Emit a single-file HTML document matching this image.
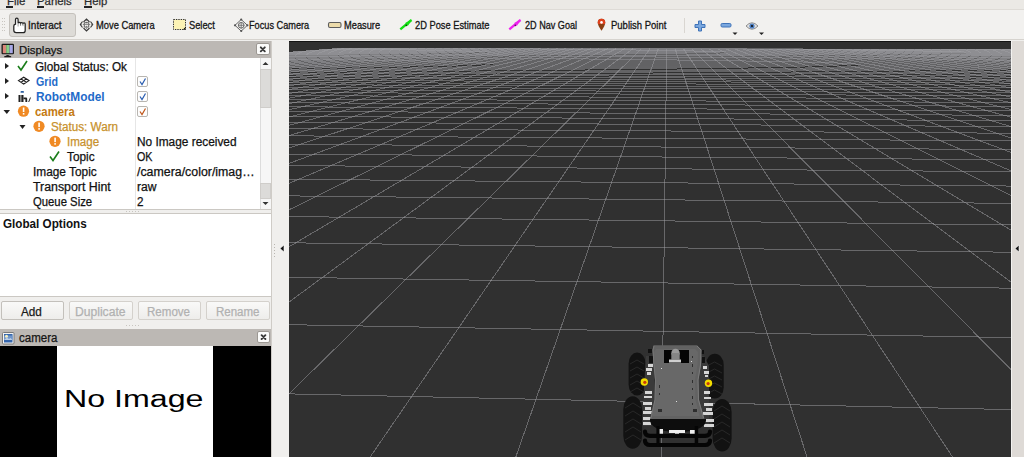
<!DOCTYPE html>
<html><head><meta charset="utf-8">
<style>
*{box-sizing:border-box;margin:0;padding:0}
html,body{width:1024px;height:457px;overflow:hidden;background:#f0efed;font-family:"Liberation Sans",sans-serif;position:relative}
.a{position:absolute}
.t{position:absolute;white-space:nowrap;line-height:1;transform-origin:0 0}
#menubar{left:0;top:0;width:1024px;height:9px;background:#ebe9e5}
#toolbar{left:0;top:9px;width:1024px;height:31px;background:#f2f1ef;border-top:1px solid #dedbd6;border-bottom:1px solid #d6d3ce}
#view{left:289px;top:41px;width:722px;height:416px;background:#303030;overflow:hidden}
#rightp{left:1011px;top:41px;width:13px;height:416px;background:#dedad6;border-left:1px solid #f3f2f0}
.hdr{background:#bcb8b4}
.closeb{width:13px;height:12px;background:#fbfbfa;border:1px solid #9c9893;border-radius:2px}
.btn{height:19px;border:1px solid #c3c0bb;border-radius:2px;background:linear-gradient(#f9f9f8,#eeedeb)}
.cb{width:11px;height:11px;border:1px solid #b8b5b0;border-radius:2px;background:#fdfdfd}
</style></head><body>
<div id="menubar" class="a"></div>
<div id="toolbar" class="a"></div>
<div class="a" style="left:6px;top:6px;width:7px;height:1.5px;background:#222"></div><div class="a" style="left:37px;top:6px;width:7px;height:1.5px;background:#222"></div><div class="a" style="left:84px;top:6px;width:8px;height:1.5px;background:#222"></div>
<!-- toolbar handle dots -->
<svg class="a" style="left:0;top:9px" width="10" height="31">
<g fill="#c9c6c1"><rect x="2" y="9" width="1" height="1"/><rect x="4" y="9" width="1" height="1"/><rect x="2" y="12" width="1" height="1"/><rect x="4" y="12" width="1" height="1"/><rect x="2" y="15" width="1" height="1"/><rect x="4" y="15" width="1" height="1"/><rect x="2" y="18" width="1" height="1"/><rect x="4" y="18" width="1" height="1"/><rect x="2" y="21" width="1" height="1"/><rect x="4" y="21" width="1" height="1"/></g>
</svg>
<div class="a" style="left:9px;top:13px;width:67px;height:24px;background:#dddbd7;border:1px solid #c4c1bc;border-radius:3px"></div>
<!-- toolbar icons -->
<svg class="a" style="left:0;top:9px" width="780" height="31">
 <!-- hand -->
 <path d="M15.5 10.6 q0-1.4 1.3-1.4 q1.3 0 1.3 1.4 v3.6 q0.4-0.8 1.3-0.8 q1 0 1.1 0.9 q0.4-0.8 1.3-0.8 q1 0 1.2 1 q0.4-0.6 1.1-0.6 q1.1 0 1.1 1.2 v6.3 q0 2.3 -2.3 2.3 h-6.7 q-2.4 0 -2.4-2.4 v-4.2 q0-1.6 1.7-1.9z" fill="#fff" stroke="#222" stroke-width="1.25"/>
 <path d="M18.1 14.5 v3 M20.6 14.5 v2.5 M23 14.8 v2.3" stroke="#777" stroke-width="0.7"/>
 <!-- move camera -->
 <g transform="translate(0,-9)">
 <g stroke="#3a3a3a" fill="none" stroke-width="1.1">
  <path d="M83.5 22 L86.5 19 L89.5 22"/><path d="M83.5 28 L86.5 31 L89.5 28"/>
  <path d="M82.5 21.5 L80.3 24.5 L82.5 27.5"/><path d="M90.5 21.5 L92.7 24.5 L90.5 27.5"/>
  <path d="M81 24.5 h11 M86.5 20 v10" stroke="#888" stroke-width="0.9" stroke-dasharray="1.2 0.8"/>
  <path d="M84.3 22.7 h4.4 v4.4 h-4.4z" stroke="#555" stroke-width="0.9"/>
 </g>
 <!-- select -->
 <rect x="173.5" y="19.5" width="12" height="10" fill="#fcf3b5" stroke="#333" stroke-width="1" stroke-dasharray="1.4 1"/>
 <path d="M183 29.5 l2.5-2.5 v2.5z" fill="#000"/>
 <!-- focus camera -->
 <g stroke="#666" fill="none" stroke-width="1"><path d="M241.2 19.5 l6.2 5.8 -6.2 5.8 -6.2-5.8z"/><circle cx="241.2" cy="25.3" r="2.8"/><path d="M238 25.3 h6.4 M241.2 22 v6.6" stroke-width="0.8"/></g>
 <g fill="#555"><circle cx="241.2" cy="19.6" r="1.1"/><circle cx="241.2" cy="31" r="1.1"/><circle cx="235" cy="25.3" r="1.1"/><circle cx="247.4" cy="25.3" r="1.1"/></g>
 <!-- measure -->
 <rect x="328.5" y="22.5" width="12.5" height="5" rx="1.5" fill="#eddcab" stroke="#5c5c5c" stroke-width="1.1"/>
 <!-- 2D pose -->
 <path d="M400.3 29.3 L411.5 20" stroke="#13df13" stroke-width="2.3"/><path d="M412 19.6 l-6.8 3.4 2.6 3z" fill="#13df13"/><circle cx="406.3" cy="25.3" r="0.9" fill="#0a4a0a"/>
 <!-- nav goal -->
 <path d="M509.3 29.3 L520.5 20" stroke="#ee22ee" stroke-width="2.3"/><path d="M521 19.6 l-6.8 3.4 2.6 3z" fill="#ee22ee"/><circle cx="515.3" cy="25.3" r="0.9" fill="#6a0a6a"/>
 <!-- publish point -->
 <path d="M601.5 30.8 q-3.8-5.5 -3.8-8.3 a3.8 3.8 0 0 1 7.6 0 q0 2.8 -3.8 8.3z" fill="#8a3e12"/>
 <path d="M597.8 22.5 a3.7 3.7 0 0 1 7.4 0 q0 0.8 -0.3 1.6 h-6.8 q-0.3-0.8 -0.3-1.6z" fill="#e0401c"/>
 <circle cx="601.5" cy="22.4" r="1.3" fill="#fff"/>
 </g>
 <!-- separator -->
 <rect x="684" y="9" width="1" height="15" fill="#d9d6d1"/>
 <!-- plus -->
 <path d="M698.5 12 h3 v3.5 h3.5 v3 h-3.5 v3.5 h-3 v-3.5 h-3.5 v-3 h3.5z" fill="#7aa7de" stroke="#3f73b8" stroke-width="1"/>
 <!-- minus -->
 <rect x="721" y="14.5" width="10" height="3.5" rx="1.2" fill="#7aa7de" stroke="#3f73b8" stroke-width="1"/>
 <path d="M732.5 23.5 h5 l-2.5 2.5z" fill="#222"/>
 <!-- eye -->
 <path d="M746 17 q6-6.5 12 0 q-6 6.5 -12 0z" fill="#e3e3e3" stroke="#777" stroke-width="0.8"/><circle cx="752" cy="17" r="2.6" fill="#4d7fc2"/><circle cx="752" cy="17" r="1.1" fill="#111"/>
 <path d="M759 23.5 h5 l-2.5 2.5z" fill="#222"/>
</svg>

<!-- ===== left dock ===== -->
<div class="a hdr" style="left:0;top:41px;width:272px;height:17px"></div>
<svg class="a" style="left:1px;top:43px" width="15" height="15">
 <rect x="0.5" y="0.8" width="12.5" height="10.5" rx="1.2" fill="#1a1a1a"/>
 <rect x="1.8" y="2" width="3.4" height="8.2" fill="#d9867a"/><rect x="5.2" y="2" width="3.3" height="8.2" fill="#86cf86"/><rect x="8.5" y="2" width="3.3" height="8.2" fill="#a9a9e8"/>
 <path d="M4.5 13 q2.2-2.2 4.4 0z" fill="#1a1a1a"/><rect x="3.2" y="13" width="7" height="1.3" rx="0.6" fill="#1a1a1a"/>
</svg>
<div class="a closeb" style="left:256px;top:42.5px;width:13.5px;height:12.8px"></div>
<svg class="a" style="left:256px;top:42.5px" width="14" height="13"><path d="M4.8 4.3 L8.8 8.3 M8.8 4.3 L4.8 8.3" stroke="#3a3a3a" stroke-width="1.9" stroke-linecap="round"/></svg>

<div class="a" style="left:0;top:58px;width:272px;height:152px;background:#fff;border-bottom:1px solid #cbc8c3;border-right:1px solid #cbc8c3"></div>
<div class="a" style="left:135px;top:58px;width:1px;height:151px;background:#e6e6e6"></div>
<!-- scrollbar -->
<div class="a" style="left:260px;top:58px;width:11px;height:151px;background:#f6f6f6;border-left:1px solid #dcdcdc"></div>
<div class="a" style="left:260px;top:69px;width:11px;height:39px;background:#dcdbd9;border:1px solid #cfcdca"></div>
<div class="a" style="left:260px;top:183px;width:11px;height:16px;background:#dcdbd9;border:1px solid #cfcdca"></div>
<svg class="a" style="left:260px;top:58px" width="11" height="151">
 <path d="M2.5 7 h6 l-3-3z" fill="#333"/>
 <path d="M2.5 144 h6 l-3 3z" fill="#333"/>
</svg>
<!-- tree icons -->
<svg class="a" style="left:0;top:58px" width="135" height="151">
 <g fill="#222">
  <path d="M5 5 v6 l4-3z"/><path d="M5 20 v6 l4-3z"/><path d="M5 35 v6 l4-3z"/>
  <path d="M3.5 52 h6.5 l-3.2 4z"/><path d="M19.5 67 h6 l-3 4z"/>
 </g>
 <path d="M18 8 l3 4 l6-9" stroke="#1a7d1a" stroke-width="1.6" fill="none"/>
 <path d="M50 98.5 l3 4 l6-9" stroke="#1a7d1a" stroke-width="1.6" fill="none"/>
 <!-- grid icon -->
 <path d="M18.4 22.6 L23.7 19.2 L29 22.6 L23.7 26 z M21 20.9 L26.4 24.3 M26.4 20.9 L21 24.3" stroke="#1e1e1e" stroke-width="1.1" fill="none"/>
 <!-- robot icon -->
 <rect x="20.5" y="33" width="3.5" height="1.8" rx="0.9" fill="#2d5fa0"/>
 <g fill="#222"><rect x="18.5" y="37" width="2" height="7"/><rect x="21.3" y="37" width="2.2" height="7"/><path d="M23.5 39.5 h2.5 q1.2 0 1.2 1.2 v3.3 h-1.8 v-2.8 h-1.9z"/><path d="M28.2 44 l1.8-4.5 h1 l-1.8 4.5z"/></g>
 <!-- warn icons -->
 <g><circle cx="23.5" cy="53.2" r="5.6" fill="#f08a24"/><rect x="22.8" y="49.5" width="1.6" height="4.5" fill="#fff"/><rect x="22.8" y="55" width="1.6" height="1.6" fill="#fff"/></g>
 <g><circle cx="39" cy="68.3" r="5.6" fill="#f08a24"/><rect x="38.3" y="64.6" width="1.6" height="4.5" fill="#fff"/><rect x="38.3" y="70.1" width="1.6" height="1.6" fill="#fff"/></g>
 <g><circle cx="55" cy="83.3" r="5.6" fill="#f08a24"/><rect x="54.3" y="79.6" width="1.6" height="4.5" fill="#fff"/><rect x="54.3" y="85.1" width="1.6" height="1.6" fill="#fff"/></g>
</svg>
<!-- checkboxes -->
<div class="a cb" style="left:137px;top:76px"></div>
<div class="a cb" style="left:137px;top:91px"></div>
<div class="a cb" style="left:137px;top:106px"></div>
<svg class="a" style="left:137px;top:76px" width="11" height="41">
 <path d="M3 5.5 l2 3 l3.5-6" stroke="#2a5db0" stroke-width="1.2" fill="none"/>
 <path d="M3 20.5 l2 3 l3.5-6" stroke="#2a5db0" stroke-width="1.2" fill="none"/>
 <path d="M3 35.5 l2 3 l3.5-6" stroke="#c0561a" stroke-width="1.2" fill="none"/>
</svg>

<!-- splitter dots -->
<svg class="a" style="left:125px;top:210px" width="20" height="3"><g fill="#c8c5c0"><rect x="1" y="1" width="1" height="1"/><rect x="4" y="1" width="1" height="1"/><rect x="7" y="1" width="1" height="1"/><rect x="10" y="1" width="1" height="1"/><rect x="13" y="1" width="1" height="1"/></g></svg>

<!-- global options -->
<div class="a" style="left:0;top:213px;width:272px;height:84px;background:#fff;border:1px solid #cbc8c3;border-left:none"></div>

<!-- buttons -->
<div class="a btn" style="left:1px;top:301px;width:63px"></div>
<div class="a btn" style="left:69px;top:301px;width:64px;border-color:#d4d1cc"></div>
<div class="a btn" style="left:138px;top:301px;width:63px;border-color:#d4d1cc"></div>
<div class="a btn" style="left:206px;top:301px;width:64px;border-color:#d4d1cc"></div>
<svg class="a" style="left:125px;top:324px" width="20" height="3"><g fill="#c8c5c0"><rect x="1" y="1" width="1" height="1"/><rect x="4" y="1" width="1" height="1"/><rect x="7" y="1" width="1" height="1"/><rect x="10" y="1" width="1" height="1"/><rect x="13" y="1" width="1" height="1"/></g></svg>

<!-- camera dock -->
<div class="a hdr" style="left:0;top:329px;width:272px;height:17px"></div>
<svg class="a" style="left:2px;top:332px" width="13" height="13">
 <rect x="0.5" y="0.5" width="11.5" height="11.5" rx="1" fill="#f4f4f4" stroke="#7a7a7a" stroke-width="1"/>
 <rect x="2" y="2" width="8.5" height="8.5" fill="#3566ad"/>
 <rect x="2" y="3.5" width="8.5" height="4.5" fill="#6f95c9"/>
 <circle cx="4.5" cy="4.3" r="1.5" fill="#f6f0c0"/>
 <path d="M2 8 l3-2.5 2 1.5 1.5-1 2 2z" fill="#b9cde6"/>
</svg>
<div class="a closeb" style="left:256.5px;top:330.8px;width:13px;height:12.5px"></div>
<svg class="a" style="left:256.5px;top:330.8px" width="14" height="13"><path d="M4.6 4.2 L8.4 8 M8.4 4.2 L4.6 8" stroke="#3a3a3a" stroke-width="1.9" stroke-linecap="round"/></svg>
<div class="a" style="left:0;top:346px;width:272px;height:111px;background:#000"></div>
<div class="a" style="left:57px;top:346px;width:156px;height:111px;background:#fff"></div>

<!-- splitter between dock and view -->
<div class="a" style="left:271px;top:41px;width:1px;height:416px;background:#cfccc7"></div>
<svg class="a" style="left:272px;top:240px" width="17" height="20">
 <g fill="#b9b6b1"><rect x="2" y="4" width="1" height="1"/><rect x="2" y="7" width="1" height="1"/><rect x="2" y="10" width="1" height="1"/><rect x="2" y="13" width="1" height="1"/><rect x="2" y="16" width="1" height="1"/></g>
 <path d="M8 8.5 l4-3.5 v7z" fill="#111" stroke="#fff" stroke-width="0.6"/>
</svg>

<!-- ===== 3D view ===== -->
<div id="view" class="a">
<svg width="722" height="416" style="position:absolute;left:0;top:0">
<g stroke="#a0a0a4" stroke-width="1" shape-rendering="crispEdges" stroke-opacity="0.5"><line x1='-3500.29' y1='276.53' x2='13752.96' y2='652.77'/><line x1='-2910.34' y1='231.83' x2='9912.41' y2='460.35'/><line x1='-2476.18' y1='198.93' x2='7785.41' y2='353.78'/><line x1='-2143.29' y1='173.70' x2='6434.32' y2='286.09'/><line x1='-1879.94' y1='153.75' x2='5500.07' y2='239.28'/><line x1='-1666.41' y1='137.56' x2='4815.54' y2='204.98'/><line x1='-1489.77' y1='124.18' x2='4292.40' y2='178.77'/><line x1='-1341.23' y1='112.92' x2='3879.60' y2='158.08'/><line x1='-1214.57' y1='103.33' x2='3545.56' y2='141.35'/><line x1='-1105.30' y1='95.04' x2='3269.70' y2='127.53'/><line x1='-1010.05' y1='87.83' x2='3038.04' y2='115.92'/><line x1='-926.30' y1='81.48' x2='2840.75' y2='106.03'/><line x1='-852.09' y1='75.86' x2='2670.70' y2='97.51'/><line x1='-785.86' y1='70.84' x2='2522.62' y2='90.10'/><line x1='-726.40' y1='66.33' x2='2392.50' y2='83.58'/><line x1='-672.72' y1='62.26' x2='2277.27' y2='77.80'/><line x1='-624.02' y1='58.57' x2='2174.51' y2='72.65' stroke-opacity='0.497'/><line x1='-579.63' y1='55.21' x2='2082.30' y2='68.03' stroke-opacity='0.495'/><line x1='-539.01' y1='52.13' x2='1999.09' y2='63.86' stroke-opacity='0.492'/><line x1='-501.69' y1='49.30' x2='1923.63' y2='60.08' stroke-opacity='0.490'/><line x1='-467.29' y1='46.70' x2='1854.88' y2='56.64' stroke-opacity='0.487'/><line x1='-435.48' y1='44.29' x2='1791.99' y2='53.49' stroke-opacity='0.485'/><line x1='-405.98' y1='42.05' x2='1734.24' y2='50.59' stroke-opacity='0.482'/><line x1='-378.55' y1='39.97' x2='1681.01' y2='47.93' stroke-opacity='0.480'/><line x1='-352.96' y1='38.03' x2='1631.81' y2='45.46' stroke-opacity='0.477'/><line x1='-329.06' y1='36.22' x2='1586.19' y2='43.18' stroke-opacity='0.475'/><line x1='-306.66' y1='34.53' x2='1543.77' y2='41.05' stroke-opacity='0.472'/><line x1='-285.64' y1='32.93' x2='1504.23' y2='39.07' stroke-opacity='0.470'/><line x1='-265.88' y1='31.43' x2='1467.28' y2='37.22' stroke-opacity='0.468'/><line x1='-247.25' y1='30.02' x2='1432.68' y2='35.49' stroke-opacity='0.465'/><line x1='-229.68' y1='28.69' x2='1400.21' y2='33.86' stroke-opacity='0.463'/><line x1='-213.06' y1='27.43' x2='1369.68' y2='32.33' stroke-opacity='0.460'/><line x1='-197.33' y1='26.24' x2='1340.93' y2='30.89' stroke-opacity='0.458'/><line x1='-182.42' y1='25.11' x2='1313.79' y2='29.53' stroke-opacity='0.455'/><line x1='-168.26' y1='24.04' x2='1288.14' y2='28.24' stroke-opacity='0.453'/><line x1='-154.79' y1='23.02' x2='1263.86' y2='27.03' stroke-opacity='0.450'/><line x1='-141.98' y1='22.05' x2='1240.84' y2='25.87' stroke-opacity='0.450'/><line x1='-129.76' y1='21.12' x2='1218.98' y2='24.78' stroke-opacity='0.450'/><line x1='-118.11' y1='20.24' x2='1198.21' y2='23.74' stroke-opacity='0.450'/><line x1='-106.98' y1='19.39' x2='1178.44' y2='22.75' stroke-opacity='0.450'/><line x1='-96.34' y1='18.59' x2='1159.59' y2='21.80' stroke-opacity='0.450'/><line x1='-86.15' y1='17.82' x2='1141.62' y2='20.90' stroke-opacity='0.450'/><line x1='-76.40' y1='17.08' x2='1124.45' y2='20.04' stroke-opacity='0.450'/><line x1='-67.04' y1='16.37' x2='1108.04' y2='19.22' stroke-opacity='0.450'/><line x1='-58.07' y1='15.69' x2='1092.34' y2='18.43' stroke-opacity='0.450'/><line x1='-49.44' y1='15.03' x2='1077.29' y2='17.68' stroke-opacity='0.450'/><line x1='-41.16' y1='14.41' x2='1062.87' y2='16.96' stroke-opacity='0.450'/><line x1='-33.18' y1='13.80' x2='1049.03' y2='16.26' stroke-opacity='0.450'/><line x1='-25.51' y1='13.22' x2='1035.74' y2='15.60' stroke-opacity='0.450'/><line x1='-18.11' y1='12.66' x2='1022.96' y2='14.96' stroke-opacity='0.450'/><line x1='-10.99' y1='12.12' x2='1010.67' y2='14.34' stroke-opacity='0.450'/><line x1='-4.11' y1='11.60' x2='998.84' y2='13.75' stroke-opacity='0.450'/><line x1='2.53' y1='11.10' x2='987.45' y2='13.18' stroke-opacity='0.450'/><line x1='8.94' y1='10.61' x2='976.46' y2='12.63' stroke-opacity='0.450'/><line x1='15.13' y1='10.14' x2='965.87' y2='12.10' stroke-opacity='0.450'/><line x1='21.12' y1='9.69' x2='955.64' y2='11.58' stroke-opacity='0.450'/><line x1='26.92' y1='9.25' x2='945.76' y2='11.09' stroke-opacity='0.450'/><line x1='32.53' y1='8.82' x2='936.22' y2='10.61' stroke-opacity='0.450'/><line x1='37.96' y1='8.41' x2='926.99' y2='10.15' stroke-opacity='0.450'/><line x1='43.23' y1='8.01' x2='918.06' y2='9.70' stroke-opacity='0.450'/><line x1='48.33' y1='7.62' x2='909.41' y2='9.27' stroke-opacity='0.450'/><line x1='53.29' y1='7.25' x2='901.04' y2='8.85' stroke-opacity='0.450'/><line x1='54.74' y1='7.14' x2='898.58' y2='8.73' stroke-opacity='0.450'/><line x1='-4348.19' y1='340.79' x2='54.74' y2='7.14'/><line x1='-4348.19' y1='340.79' x2='54.74' y2='7.14'/><line x1='-4258.77' y1='343.31' x2='62.88' y2='7.15'/><line x1='-4168.13' y1='345.86' x2='71.02' y2='7.17'/><line x1='-4076.21' y1='348.45' x2='79.17' y2='7.18'/><line x1='-3983.01' y1='351.07' x2='87.32' y2='7.20'/><line x1='-3888.49' y1='353.74' x2='95.49' y2='7.22'/><line x1='-3792.63' y1='356.44' x2='103.66' y2='7.23'/><line x1='-3695.39' y1='359.17' x2='111.84' y2='7.25'/><line x1='-3596.74' y1='361.95' x2='120.02' y2='7.26'/><line x1='-3496.66' y1='364.77' x2='128.22' y2='7.28'/><line x1='-3395.12' y1='367.63' x2='136.42' y2='7.29'/><line x1='-3292.07' y1='370.54' x2='144.63' y2='7.31'/><line x1='-3187.49' y1='373.48' x2='152.85' y2='7.32'/><line x1='-3081.35' y1='376.47' x2='161.07' y2='7.34'/><line x1='-2973.60' y1='379.51' x2='169.31' y2='7.35'/><line x1='-2864.22' y1='382.59' x2='177.55' y2='7.37'/><line x1='-2753.15' y1='385.72' x2='185.80' y2='7.38'/><line x1='-2640.37' y1='388.89' x2='194.05' y2='7.40'/><line x1='-2525.84' y1='392.12' x2='202.32' y2='7.42'/><line x1='-2409.51' y1='395.40' x2='210.59' y2='7.43'/><line x1='-2291.34' y1='398.72' x2='218.87' y2='7.45'/><line x1='-2171.28' y1='402.11' x2='227.15' y2='7.46'/><line x1='-2049.30' y1='405.54' x2='235.45' y2='7.48'/><line x1='-1925.34' y1='409.03' x2='243.75' y2='7.49'/><line x1='-1799.36' y1='412.58' x2='252.06' y2='7.51'/><line x1='-1671.30' y1='416.19' x2='260.38' y2='7.53'/><line x1='-1541.12' y1='419.86' x2='268.71' y2='7.54'/><line x1='-1408.76' y1='423.59' x2='277.04' y2='7.56'/><line x1='-1274.16' y1='427.38' x2='285.39' y2='7.57'/><line x1='-1137.27' y1='431.23' x2='293.74' y2='7.59'/><line x1='-998.03' y1='435.15' x2='302.10' y2='7.60'/><line x1='-856.38' y1='439.14' x2='310.46' y2='7.62'/><line x1='-712.26' y1='443.20' x2='318.84' y2='7.64'/><line x1='-565.59' y1='447.34' x2='327.22' y2='7.65'/><line x1='-416.32' y1='451.54' x2='335.61' y2='7.67'/><line x1='-264.37' y1='455.82' x2='344.01' y2='7.68'/><line x1='-109.67' y1='460.18' x2='352.41' y2='7.70'/><line x1='47.86' y1='464.62' x2='360.83' y2='7.71'/><line x1='208.29' y1='469.13' x2='369.25' y2='7.73'/><line x1='371.71' y1='473.74' x2='377.68' y2='7.75'/><line x1='538.20' y1='478.43' x2='386.12' y2='7.76'/><line x1='707.84' y1='483.21' x2='394.56' y2='7.78'/><line x1='880.73' y1='488.08' x2='403.02' y2='7.79'/><line x1='1056.96' y1='493.04' x2='411.48' y2='7.81'/><line x1='1236.64' y1='498.10' x2='419.95' y2='7.83'/><line x1='1419.85' y1='503.26' x2='428.43' y2='7.84'/><line x1='1606.71' y1='508.53' x2='436.91' y2='7.86'/><line x1='1797.33' y1='513.90' x2='445.41' y2='7.87'/><line x1='1991.82' y1='519.37' x2='453.91' y2='7.89'/><line x1='2190.30' y1='524.96' x2='462.42' y2='7.91'/><line x1='2392.89' y1='530.67' x2='470.94' y2='7.92'/><line x1='2599.73' y1='536.50' x2='479.47' y2='7.94'/><line x1='2810.94' y1='542.45' x2='488.00' y2='7.95'/><line x1='3026.68' y1='548.52' x2='496.55' y2='7.97'/><line x1='3247.08' y1='554.73' x2='505.10' y2='7.99'/><line x1='3472.30' y1='561.08' x2='513.66' y2='8.00'/><line x1='3702.50' y1='567.56' x2='522.23' y2='8.02'/><line x1='3937.84' y1='574.19' x2='530.80' y2='8.03'/><line x1='4178.50' y1='580.97' x2='539.39' y2='8.05'/><line x1='4424.67' y1='587.90' x2='547.98' y2='8.07'/><line x1='4676.53' y1='595.00' x2='556.58' y2='8.08'/><line x1='4934.28' y1='602.26' x2='565.19' y2='8.10'/><line x1='5198.13' y1='609.69' x2='573.81' y2='8.11'/><line x1='5468.31' y1='617.30' x2='582.43' y2='8.13'/><line x1='5745.03' y1='625.09' x2='591.07' y2='8.15'/><line x1='6028.55' y1='633.08' x2='599.71' y2='8.16'/><line x1='6319.12' y1='641.27' x2='608.36' y2='8.18'/><line x1='6616.99' y1='649.66' x2='617.02' y2='8.20'/><line x1='6922.46' y1='658.26' x2='625.69' y2='8.21'/><line x1='7235.82' y1='667.09' x2='634.36' y2='8.23'/><line x1='7557.37' y1='676.15' x2='643.05' y2='8.24'/><line x1='7887.43' y1='685.44' x2='651.74' y2='8.26'/><line x1='8226.37' y1='694.99' x2='660.44' y2='8.28'/><line x1='8574.53' y1='704.80' x2='669.15' y2='8.29'/><line x1='8932.29' y1='714.87' x2='677.87' y2='8.31'/><line x1='9300.07' y1='725.23' x2='686.59' y2='8.33'/><line x1='9678.28' y1='735.89' x2='695.33' y2='8.34'/><line x1='10067.38' y1='746.85' x2='704.07' y2='8.36'/><line x1='10467.84' y1='758.13' x2='712.82' y2='8.38'/><line x1='10880.18' y1='769.74' x2='721.58' y2='8.39'/><line x1='11304.92' y1='781.71' x2='730.35' y2='8.41'/><line x1='11742.63' y1='794.04' x2='739.13' y2='8.43'/><line x1='12193.92' y1='806.75' x2='747.91' y2='8.44'/><line x1='12659.43' y1='819.86' x2='756.71' y2='8.46'/><line x1='13139.84' y1='833.39' x2='765.51' y2='8.48'/><line x1='13635.88' y1='847.37' x2='774.32' y2='8.49'/><line x1='14148.32' y1='861.80' x2='783.14' y2='8.51'/><line x1='14678.00' y1='876.72' x2='791.97' y2='8.52'/><line x1='15225.79' y1='892.15' x2='800.81' y2='8.54'/><line x1='15792.64' y1='908.12' x2='809.65' y2='8.56'/><line x1='16379.56' y1='924.65' x2='818.51' y2='8.57'/><line x1='16987.65' y1='941.78' x2='827.37' y2='8.59'/><line x1='17618.05' y1='959.54' x2='836.24' y2='8.61'/><line x1='18272.04' y1='977.96' x2='845.12' y2='8.62'/><line x1='18950.95' y1='997.08' x2='854.01' y2='8.64'/><line x1='19656.23' y1='1016.95' x2='862.91' y2='8.66'/><line x1='20389.47' y1='1037.60' x2='871.81' y2='8.68'/><line x1='21152.33' y1='1059.09' x2='880.73' y2='8.69'/><line x1='21946.68' y1='1081.47' x2='889.65' y2='8.71'/><line x1='22774.48' y1='1104.78' x2='898.58' y2='8.73'/></g>
<g transform="translate(-289,-41)">
 <!-- wheels -->
 <g fill="#121212">
  <rect x="628.6" y="352.5" width="17" height="43" rx="8.5" ry="11"/>
  <rect x="623.3" y="396.3" width="18.8" height="52.5" rx="9.4" ry="13"/>
  <rect x="705.9" y="353.8" width="17.8" height="44.6" rx="8.9" ry="11"/>
  <rect x="712.6" y="399" width="19" height="52.5" rx="9.5" ry="13"/>
 </g>
 <g stroke="#2a2a2a" stroke-width="0.9" fill="none">
  <path d="M630 364 l7 -4 l7 4 M630 371 l7 -4 l7 4 M630 378 l7 -4 l7 4 M630 385 l7 -4 l7 4 M630 392 l7 -4 l7 4"/>
  <path d="M625 408 l8 -5 l8 5 M625 416 l8 -5 l8 5 M625 424 l8 -5 l8 5 M625 432 l8 -5 l8 5 M625 440 l8 -5 l8 5"/>
  <path d="M707 366 l7.5 -4 l7.5 4 M707 373 l7.5 -4 l7.5 4 M707 380 l7.5 -4 l7.5 4 M707 387 l7.5 -4 l7.5 4 M707 394 l7.5 -4 l7.5 4"/>
  <path d="M714 411 l8 -5 l8 5 M714 419 l8 -5 l8 5 M714 427 l8 -5 l8 5 M714 435 l8 -5 l8 5 M714 443 l8 -5 l8 5"/>
 </g>
 <!-- side frames -->
 <path d="M646 356 h8 v70 h-11 l1-40z" fill="#3a3a3a"/>
 <path d="M699 356 h5 l5 10 v60 h-10z" fill="#3a3a3a"/>
 <g fill="#111"><rect x="648" y="349" width="4" height="4"/><rect x="649" y="356" width="4" height="7"/><rect x="700" y="350" width="4" height="4"/><rect x="702" y="357" width="3" height="6"/></g>
 <g fill="#d6d6d6">
  <rect x="648" y="364" width="5" height="3"/><rect x="646" y="368" width="6" height="3"/><rect x="647" y="372" width="4" height="3"/><rect x="645" y="391" width="7" height="3"/><rect x="644" y="396" width="8" height="2"/>
  <rect x="643" y="402" width="9" height="3"/><rect x="645" y="407" width="6" height="3"/><rect x="643" y="411" width="10" height="3"/><rect x="643" y="417" width="9" height="3"/><rect x="643" y="422" width="8" height="3"/>
  <rect x="703" y="366" width="4" height="3"/><rect x="704" y="371" width="5" height="3"/><rect x="705" y="375" width="3" height="2"/><rect x="704" y="391" width="6" height="3"/><rect x="704" y="397" width="7" height="2"/>
  <rect x="704" y="403" width="9" height="3"/><rect x="706" y="408" width="6" height="3"/><rect x="703" y="412" width="10" height="3"/><rect x="705" y="419" width="9" height="3"/><rect x="704" y="424" width="10" height="3"/>
 </g>
 <!-- plate -->
 <path d="M653.5 345.3 h43.5 l4.5 4.5 l-0.5 15 l-2.5 15 l0.5 20 l5.5 19.2 h-54.5 l4.5-19.2 l0.5-20 l-1.5-15 l-1-15z" fill="#626262"/>
 <path d="M656 349 h39 l3 3 l-0.5 13 l-2.5 15 l0.5 20 l4 16 h-47.5 l3.5-16 l0.5-20 l-1.5-15 l-0.5-13z" fill="#686868"/>
 <path d="M697 346 l4 4 l-0.5 15 l-2.5 15 l0.5 20 l5 18" stroke="#7c7c7c" stroke-width="1" fill="none"/>
 <path d="M654 346 l-1 4 l1 15 l1.5 15 l-0.5 20 l-4 18" stroke="#777" stroke-width="1" fill="none"/>
 <rect x="664" y="350" width="25" height="13" fill="#050505"/>
 <circle cx="675.5" cy="353" r="4.2" fill="#9a9a9a"/>
 <rect x="671.3" y="353" width="8.4" height="6.5" fill="#858585"/>
 <rect x="669" y="359.5" width="12" height="3" fill="#cfcfcf"/>
 <g fill="#2e2e2e"><rect x="692" y="356" width="1" height="2"/><rect x="692" y="364" width="1" height="3"/><rect x="692" y="372" width="1" height="2"/><rect x="692" y="380" width="1" height="3"/><rect x="692" y="388" width="1" height="2"/><rect x="692" y="396" width="1" height="3"/><rect x="692" y="403" width="1" height="2"/>
  <rect x="659" y="385" width="1" height="3"/><rect x="659" y="393" width="1" height="2"/><rect x="658" y="409" width="4" height="3"/><rect x="693" y="409" width="4" height="3"/></g>
 <g fill="#e0e0e0"><rect x="691" y="361" width="1" height="1"/><rect x="661" y="368" width="1" height="1"/><rect x="676" y="401" width="1" height="1"/></g>
 <!-- lights -->
 <circle cx="644.3" cy="382" r="3.7" fill="#f2dc00"/><circle cx="644.8" cy="382.3" r="1.6" fill="#c83a0a"/>
 <circle cx="708.5" cy="383.3" r="3.7" fill="#f2dc00"/><circle cx="708.1" cy="383.6" r="1.6" fill="#c83a0a"/>
 <!-- front bumper -->
 <path d="M650 419 h56 q1 5 -6 9 q-7 4 -22 4 q-15 0 -22-4 q-7-4 -6-9z" fill="#0d0d0d"/>
 <g fill="#eeeeee"><rect x="659" y="429" width="4" height="7"/><rect x="669" y="430" width="16" height="3"/><rect x="675" y="432" width="4" height="4"/><rect x="690" y="430" width="6" height="4"/></g>
 <g fill="none" stroke="#050505" stroke-width="4.2" stroke-linecap="round">
  <path d="M645 431.5 q0 4.3 5 4.3 h55 q5 0 5-4.3"/>
  <path d="M645 440.5 q0 4.5 5 4.5 h55 q5 0 5-4.5"/>
 </g>
 <g fill="#050505">
  <rect x="656.4" y="426" width="3.2" height="20"/>
  <rect x="694.7" y="426" width="3.5" height="20"/>
 </g>
</g>

</svg>
</div>
<div class="a" style="left:289px;top:41px;width:722px;height:1px;background:#141414"></div>
<div id="rightp" class="a"></div>
<svg class="a" style="left:1011px;top:240px" width="13" height="20">
 <path d="M4 8.5 l4-3.5 v7z" fill="#111" stroke="#fff" stroke-width="0.6"/>
</svg>

<div class='t' style='left:6.6px;top:-3.93px;font-size:11.5px;color:#2c2c2c;font-weight:normal;transform:scaleX(0.9929);-webkit-text-stroke:0.25px #2c2c2c;'>File</div>
<div class='t' style='left:37.3px;top:-3.93px;font-size:11.5px;color:#2c2c2c;font-weight:normal;transform:scaleX(0.9866);-webkit-text-stroke:0.25px #2c2c2c;'>Panels</div>
<div class='t' style='left:84.0px;top:-3.93px;font-size:11.5px;color:#2c2c2c;font-weight:normal;transform:scaleX(0.9849);-webkit-text-stroke:0.25px #2c2c2c;'>Help</div>
<div class='t' style='left:27.8px;top:19.96px;font-size:10.8px;color:#151515;font-weight:normal;transform:scaleX(0.9329);-webkit-text-stroke:0.30px #151515;'>Interact</div>
<div class='t' style='left:96.1px;top:19.96px;font-size:10.8px;color:#151515;font-weight:normal;transform:scaleX(0.8641);-webkit-text-stroke:0.30px #151515;'>Move Camera</div>
<div class='t' style='left:189.2px;top:19.96px;font-size:10.8px;color:#151515;font-weight:normal;transform:scaleX(0.8596);-webkit-text-stroke:0.30px #151515;'>Select</div>
<div class='t' style='left:249.4px;top:19.96px;font-size:10.8px;color:#151515;font-weight:normal;transform:scaleX(0.8501);-webkit-text-stroke:0.30px #151515;'>Focus Camera</div>
<div class='t' style='left:344.4px;top:19.96px;font-size:10.8px;color:#151515;font-weight:normal;transform:scaleX(0.8592);-webkit-text-stroke:0.30px #151515;'>Measure</div>
<div class='t' style='left:415.3px;top:19.96px;font-size:10.8px;color:#151515;font-weight:normal;transform:scaleX(0.8609);-webkit-text-stroke:0.30px #151515;'>2D Pose Estimate</div>
<div class='t' style='left:524.5px;top:19.96px;font-size:10.8px;color:#151515;font-weight:normal;transform:scaleX(0.8429);-webkit-text-stroke:0.30px #151515;'>2D Nav Goal</div>
<div class='t' style='left:611.4px;top:19.96px;font-size:10.8px;color:#151515;font-weight:normal;transform:scaleX(0.8789);-webkit-text-stroke:0.30px #151515;'>Publish Point</div>
<div class='t' style='left:19.3px;top:44.97px;font-size:11.5px;color:#151515;font-weight:normal;transform:scaleX(0.9938);-webkit-text-stroke:0.25px #151515;'>Displays</div>
<div class='t' style='left:19.3px;top:332.19px;font-size:12.3px;color:#151515;font-weight:normal;transform:scaleX(0.9362);-webkit-text-stroke:0.25px #151515;'>camera</div>
<div class='t' style='left:35.0px;top:61.24px;font-size:12.0px;color:#111;font-weight:normal;transform:scaleX(0.9772);-webkit-text-stroke:0.25px #111;'>Global Status: Ok</div>
<div class='t' style='left:35.9px;top:76.14px;font-size:12.0px;color:#1f6bc9;font-weight:bold;transform:scaleX(0.8877);'>Grid</div>
<div class='t' style='left:35.9px;top:91.04px;font-size:12.0px;color:#1f6bc9;font-weight:bold;transform:scaleX(0.9895);'>RobotModel</div>
<div class='t' style='left:35.0px;top:105.94px;font-size:12.0px;color:#c47a12;font-weight:bold;transform:scaleX(0.9489);'>camera</div>
<div class='t' style='left:50.6px;top:120.84px;font-size:12.0px;color:#c8912c;font-weight:normal;transform:scaleX(0.9736);-webkit-text-stroke:0.25px #c8912c;'>Status: Warn</div>
<div class='t' style='left:66.7px;top:135.74px;font-size:12.0px;color:#c8912c;font-weight:normal;transform:scaleX(0.9652);-webkit-text-stroke:0.25px #c8912c;'>Image</div>
<div class='t' style='left:66.7px;top:150.64px;font-size:12.0px;color:#111;font-weight:normal;transform:scaleX(0.9852);-webkit-text-stroke:0.25px #111;'>Topic</div>
<div class='t' style='left:33.3px;top:165.64px;font-size:12.0px;color:#111;font-weight:normal;transform:scaleX(0.9878);-webkit-text-stroke:0.25px #111;'>Image Topic</div>
<div class='t' style='left:33.3px;top:180.64px;font-size:12.0px;color:#111;font-weight:normal;transform:scaleX(1.0279);-webkit-text-stroke:0.25px #111;'>Transport Hint</div>
<div class='t' style='left:33.3px;top:195.64px;font-size:12.0px;color:#111;font-weight:normal;transform:scaleX(0.9423);-webkit-text-stroke:0.25px #111;'>Queue Size</div>
<div class='t' style='left:137.2px;top:135.74px;font-size:12.0px;color:#111;font-weight:normal;transform:scaleX(0.9879);-webkit-text-stroke:0.25px #111;'>No Image received</div>
<div class='t' style='left:137.2px;top:150.64px;font-size:12.0px;color:#111;font-weight:normal;transform:scaleX(0.8937);-webkit-text-stroke:0.25px #111;'>OK</div>
<div class='t' style='left:137.2px;top:165.64px;font-size:12.0px;color:#111;font-weight:normal;transform:scaleX(1.0303);-webkit-text-stroke:0.25px #111;'>/camera/color/imag…</div>
<div class='t' style='left:137.2px;top:180.64px;font-size:12.0px;color:#111;font-weight:normal;transform:scaleX(1.0081);-webkit-text-stroke:0.25px #111;'>raw</div>
<div class='t' style='left:137.2px;top:195.64px;font-size:12.0px;color:#111;font-weight:normal;transform:scaleX(0.9720);-webkit-text-stroke:0.25px #111;'>2</div>
<div class='t' style='left:2.7px;top:218.44px;font-size:12.0px;color:#111;font-weight:bold;transform:scaleX(0.9733);'>Global Options</div>
<div class='t' style='left:21.3px;top:305.94px;font-size:12.0px;color:#1a1a1a;font-weight:normal;transform:scaleX(0.9785);-webkit-text-stroke:0.25px #1a1a1a;'>Add</div>
<div class='t' style='left:75.4px;top:305.94px;font-size:12.0px;color:#b1b1b1;font-weight:normal;transform:scaleX(1.0094);-webkit-text-stroke:0.25px #b1b1b1;'>Duplicate</div>
<div class='t' style='left:147.4px;top:305.94px;font-size:12.0px;color:#b1b1b1;font-weight:normal;transform:scaleX(0.9622);-webkit-text-stroke:0.25px #b1b1b1;'>Remove</div>
<div class='t' style='left:216.4px;top:305.94px;font-size:12.0px;color:#b1b1b1;font-weight:normal;transform:scaleX(0.9590);-webkit-text-stroke:0.25px #b1b1b1;'>Rename</div>
<div class='t' style='left:64.3px;top:387.53px;font-size:23.0px;color:#000;font-weight:normal;transform:scaleX(1.3989);'>No Image</div>
</body></html>
